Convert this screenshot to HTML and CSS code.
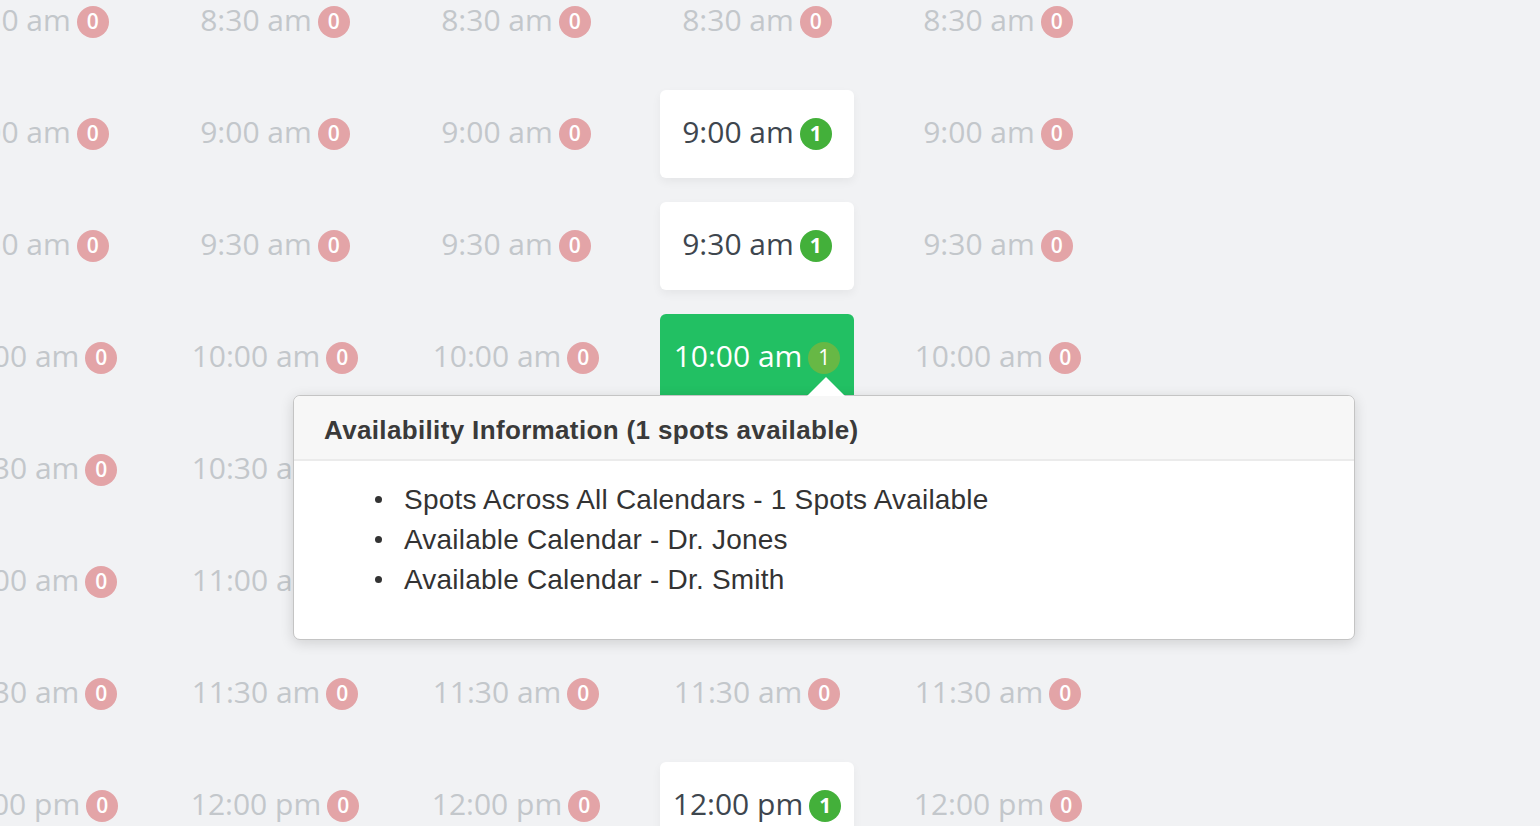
FILE: index.html
```html
<!DOCTYPE html>
<html lang="en">
<head>
<meta charset="utf-8">
<title>Availability</title>
<link rel="stylesheet" href="styles.css">
</head>
<body>
<div class="grid">
  <div class="slot"><span class="time">8:30 am</span><span class="badge none">0</span></div>
  <div class="slot"><span class="time">8:30 am</span><span class="badge none">0</span></div>
  <div class="slot"><span class="time">8:30 am</span><span class="badge none">0</span></div>
  <div class="slot"><span class="time">8:30 am</span><span class="badge none">0</span></div>
  <div class="slot"><span class="time">8:30 am</span><span class="badge none">0</span></div>

  <div class="slot"><span class="time">9:00 am</span><span class="badge none">0</span></div>
  <div class="slot"><span class="time">9:00 am</span><span class="badge none">0</span></div>
  <div class="slot"><span class="time">9:00 am</span><span class="badge none">0</span></div>
  <div class="slot open"><span class="time">9:00 am</span><span class="badge ok">1</span></div>
  <div class="slot"><span class="time">9:00 am</span><span class="badge none">0</span></div>

  <div class="slot"><span class="time">9:30 am</span><span class="badge none">0</span></div>
  <div class="slot"><span class="time">9:30 am</span><span class="badge none">0</span></div>
  <div class="slot"><span class="time">9:30 am</span><span class="badge none">0</span></div>
  <div class="slot open"><span class="time">9:30 am</span><span class="badge ok">1</span></div>
  <div class="slot"><span class="time">9:30 am</span><span class="badge none">0</span></div>

  <div class="slot"><span class="time">10:00 am</span><span class="badge none">0</span></div>
  <div class="slot"><span class="time">10:00 am</span><span class="badge none">0</span></div>
  <div class="slot"><span class="time">10:00 am</span><span class="badge none">0</span></div>
  <div class="slot selected"><span class="time">10:00 am</span><span class="badge sel">1</span>
    <div class="popover">
      <div class="arrow"></div>
      <div class="pop-head">Availability Information (1 spots available)</div>
      <ul class="pop-body">
        <li>Spots Across All Calendars - 1 Spots Available</li>
        <li>Available Calendar - Dr. Jones</li>
        <li>Available Calendar - Dr. Smith</li>
      </ul>
    </div>
  </div>
  <div class="slot"><span class="time">10:00 am</span><span class="badge none">0</span></div>

  <div class="slot"><span class="time">10:30 am</span><span class="badge none">0</span></div>
  <div class="slot"><span class="time">10:30 am</span><span class="badge none">0</span></div>
  <div class="slot"><span class="time">10:30 am</span><span class="badge none">0</span></div>
  <div class="slot"><span class="time">10:30 am</span><span class="badge none">0</span></div>
  <div class="slot"><span class="time">10:30 am</span><span class="badge none">0</span></div>

  <div class="slot"><span class="time">11:00 am</span><span class="badge none">0</span></div>
  <div class="slot"><span class="time">11:00 am</span><span class="badge none">0</span></div>
  <div class="slot"><span class="time">11:00 am</span><span class="badge none">0</span></div>
  <div class="slot"><span class="time">11:00 am</span><span class="badge none">0</span></div>
  <div class="slot"><span class="time">11:00 am</span><span class="badge none">0</span></div>

  <div class="slot"><span class="time">11:30 am</span><span class="badge none">0</span></div>
  <div class="slot"><span class="time">11:30 am</span><span class="badge none">0</span></div>
  <div class="slot"><span class="time">11:30 am</span><span class="badge none">0</span></div>
  <div class="slot"><span class="time">11:30 am</span><span class="badge none">0</span></div>
  <div class="slot"><span class="time">11:30 am</span><span class="badge none">0</span></div>

  <div class="slot"><span class="time">12:00 pm</span><span class="badge none">0</span></div>
  <div class="slot"><span class="time">12:00 pm</span><span class="badge none">0</span></div>
  <div class="slot"><span class="time">12:00 pm</span><span class="badge none">0</span></div>
  <div class="slot open"><span class="time">12:00 pm</span><span class="badge ok">1</span></div>
  <div class="slot"><span class="time">12:00 pm</span><span class="badge none">0</span></div>
</div>
</body>
</html>
```

FILE: styles.css
```css
html, body {
  margin: 0;
  padding: 0;
  background: #f1f2f4;
  overflow: hidden;
  height: 826px;
}

.grid {
  display: grid;
  grid-template-columns: repeat(5, 194px);
  grid-auto-rows: 88px;
  column-gap: 47px;
  row-gap: 24px;
  margin-left: -63px;
  margin-top: -22px;
  font-family: "Open Sans", "Liberation Sans", sans-serif;
}

.slot {
  display: flex;
  align-items: center;
  justify-content: center;
  gap: 6px;
  padding-bottom: 5px;
  box-sizing: border-box;
  border-radius: 6px;
  color: #c3c7cb;
  font-size: 30px;
  white-space: nowrap;
}

.slot.open {
  background: #ffffff;
  color: #3e464e;
  box-shadow: 0 4px 10px rgba(0, 0, 0, 0.05);
}

.slot.selected {
  position: relative;
  background: #22c063;
  color: #ffffff;
  border-radius: 6px 6px 0 0;
}

.time {
  line-height: 1;
}

.badge {
  width: 32px;
  height: 32px;
  border-radius: 50%;
  display: flex;
  align-items: center;
  justify-content: center;
  color: #ffffff;
  font-size: 21px;
  font-weight: 600;
  line-height: 1;
  margin-top: 4px;
}

.badge.none { background: #e3a4a7; }
.badge.ok { background: #43b03a; font-weight: 700; }
.badge.sel { background: #67b845; font-weight: 400; }

.popover {
  position: absolute;
  left: -367px;
  top: 81px;
  width: 1060px;
  height: 243px;
  background: #ffffff;
  border: 1px solid #c4c4c4;
  border-radius: 7px;
  box-shadow: 0 3px 14px rgba(0, 0, 0, 0.14);
  font-family: "Liberation Sans", Arial, sans-serif;
  color: #333333;
  white-space: normal;
  z-index: 5;
}

.arrow {
  position: absolute;
  top: -19px;
  left: 513px;
  width: 0;
  height: 0;
  border-left: 19px solid transparent;
  border-right: 19px solid transparent;
  border-bottom: 19px solid #ffffff;
}

.pop-head {
  height: 65px;
  box-sizing: border-box;
  padding: 5px 30px 0;
  display: flex;
  align-items: center;
  background: #f7f7f7;
  border-bottom: 2px solid #ebebeb;
  border-radius: 7px 7px 0 0;
  font-size: 26px;
  font-weight: 700;
  letter-spacing: 0.35px;
  color: #3a3a3a;
}

.pop-body {
  margin: 0;
  padding: 19px 0 0 110px;
  list-style: none;
  font-size: 28px;
  letter-spacing: 0.2px;
  line-height: 40px;
  color: #333333;
}

.pop-body li::before {
  content: "";
  display: inline-block;
  width: 7px;
  height: 7px;
  border-radius: 50%;
  background: #333333;
  margin-left: -29px;
  margin-right: 22px;
  vertical-align: middle;
  position: relative;
  top: -2px;
}
```
